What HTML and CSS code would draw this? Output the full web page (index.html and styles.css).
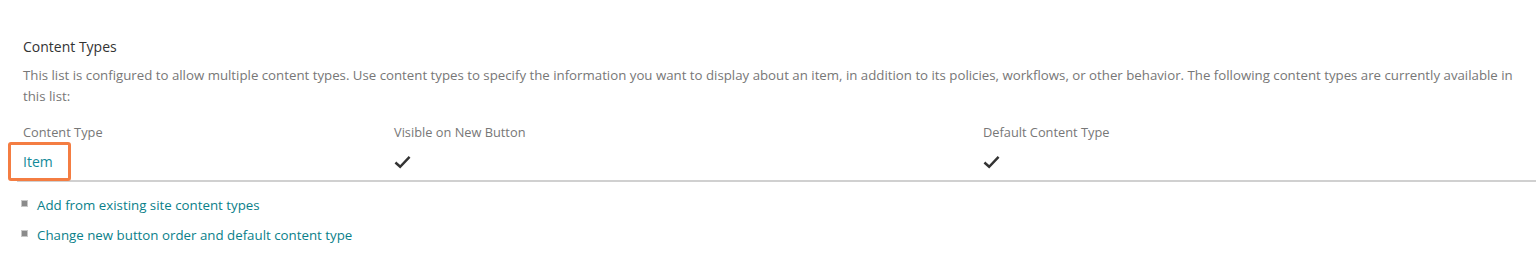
FILE: index.html
```html
<!DOCTYPE html>
<html>
<head>
<meta charset="utf-8">
<link rel="stylesheet" href="styles.css">
</head>
<body>
<div class="page">
  <h2 class="title">Content Types</h2>
  <p class="desc">This list is configured to allow multiple content types. Use content types to specify the information you want to display about an item, in addition to its policies, workflows, or other behavior. The following content types are currently available in this list:</p>
  <div class="table">
    <div class="row head">
      <div class="c1">Content Type</div>
      <div class="c2">Visible on New Button</div>
      <div class="c3">Default Content Type</div>
    </div>
    <div class="row body">
      <div class="c1"><span class="hl"><a class="link item">Item</a></span></div>
      <div class="c2"><svg class="check" viewBox="0 0 18 14"><path d="M1.5 7.5 L6.5 12 L16.5 1.5" fill="none" stroke="#333" stroke-width="2.6"/></svg></div>
      <div class="c3"><svg class="check" viewBox="0 0 18 14"><path d="M1.5 7.5 L6.5 12 L16.5 1.5" fill="none" stroke="#333" stroke-width="2.6"/></svg></div>
    </div>
  </div>
  <ul class="actions">
    <li><span class="bullet"></span><a class="link">Add from existing site content types</a></li>
    <li><span class="bullet"></span><a class="link">Change new button order and default content type</a></li>
  </ul>
</div>
</body>
</html>
```
FILE: styles.css
```css
html, body { margin: 0; padding: 0; background: #fff; }
body { font-family: "Open Sans", "Noto Sans", sans-serif; }
.page { padding: 37px 0 0 23px; }
.title { margin: 0; font-size: 14px; font-weight: 400; color: #333; line-height: 20px; }
.desc { margin: 8px 16px 0 0; font-size: 13.25px; color: #777; line-height: 21px; }
.table { margin-top: 15px; margin-left: -6px; }
.row { display: grid; grid-template-columns: 371px 589px 1fr; }
.row.head { font-size: 12.8px; color: #777; line-height: 20px; padding-left: 6px; }
.row.body { border-bottom: 2px solid #d0d0d0; height: 38px; align-items: center; padding-left: 6px; }
.hl { display: inline-block; margin-left: -15px; padding: 5px 15px 6px 12px; border: 3px solid #f47d42; border-radius: 3px; }
.link { color: #0a7f8a; font-size: 13.3px; text-decoration: none; }
.item { font-size: 14px; color: #138a99; }
.check { width: 17px; height: 14px; display: block; margin-top: 0; }
.actions { list-style: none; margin: 8px 0 0 0; padding: 0; }
.actions li { display: flex; align-items: center; height: 30px; }
.bullet { width: 5px; height: 5px; background: #8a8a8a; border: 1px solid #c8c8c8; margin: -4px 9px 0 -2px; }
```
